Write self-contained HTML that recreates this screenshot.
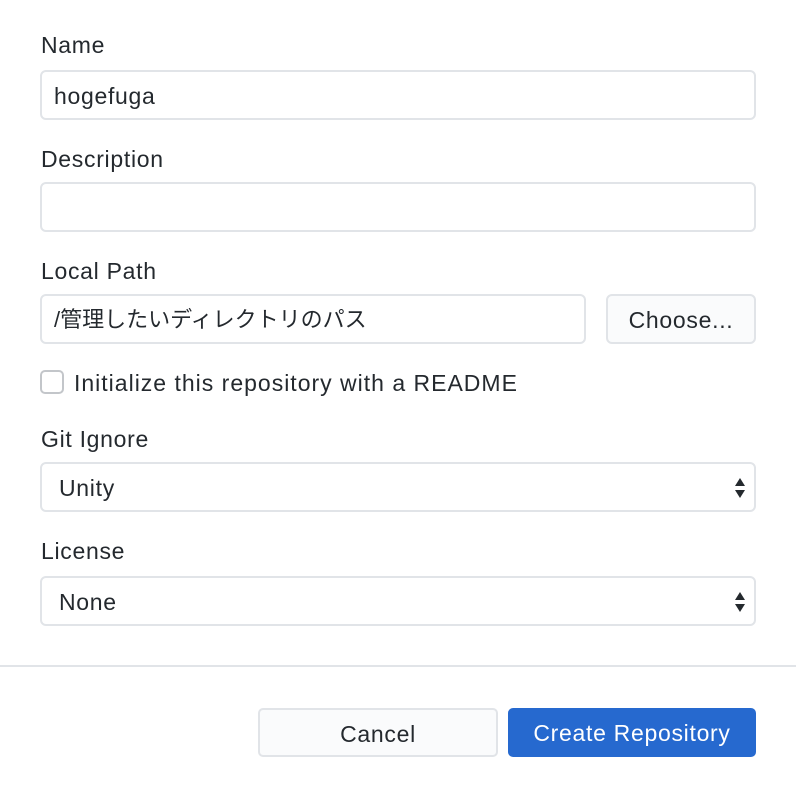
<!DOCTYPE html>
<html><head><meta charset="utf-8"><style>
body{margin:0;width:796px;height:794px;background:#fff;font-family:"Liberation Sans","Noto Sans CJK JP",sans-serif;color:#24292e;position:relative;overflow:hidden;font-size:23px;letter-spacing:0.7px}
.a{position:absolute}
.lbl{left:41px;line-height:26px}
.in{left:40px;width:712px;height:46px;border:2px solid #e1e4e8;border-radius:6px;line-height:48px}
.in span{position:absolute;left:12px;top:0}
.arr{position:absolute;right:8px;top:13px;width:12px}
</style></head><body>
<div class="a lbl" style="top:32px">Name</div>
<div class="a in" style="top:70px"><span>hogefuga</span></div>
<div class="a lbl" style="top:146px">Description</div>
<div class="a in" style="top:182px"></div>
<div class="a lbl" style="top:258px">Local Path</div>
<div class="a in" style="top:294px;width:542px"><span style="letter-spacing:0;font-size:22px">/管理したいディレクトリのパス</span></div>
<div class="a" style="left:606px;top:294px;width:146px;height:46px;border:2px solid #e1e4e8;border-radius:6px;background:#fafbfc;line-height:48px;text-align:center">Choose...</div>
<div class="a" style="left:40px;top:370px;width:20px;height:20px;border:2px solid #c3c6ca;border-radius:5px"></div>
<div class="a" style="left:74px;top:370px;line-height:26px;letter-spacing:1px">Initialize this repository with a README</div>
<div class="a lbl" style="top:426px">Git Ignore</div>
<div class="a in" style="top:462px"><span style="left:17px">Unity</span><svg class="arr" viewBox="0 0 12 22" height="22"><path d="M6 1L11 9H1Z M1 13H11L6 21Z" fill="#24292e"/></svg></div>
<div class="a lbl" style="top:538px">License</div>
<div class="a in" style="top:576px"><span style="left:17px">None</span><svg class="arr" viewBox="0 0 12 22" height="22"><path d="M6 1L11 9H1Z M1 13H11L6 21Z" fill="#24292e"/></svg></div>
<div class="a" style="left:0;top:665px;width:796px;height:2px;background:#e1e4e8"></div>
<div class="a" style="left:258px;top:708px;width:236px;height:45px;border:2px solid #e1e4e8;border-radius:5px;background:#fafbfc;line-height:49px;text-align:center">Cancel</div>
<div class="a" style="left:508px;top:708px;width:248px;height:49px;border-radius:5px;background:#2669cf;color:#fff;line-height:51px;text-align:center">Create Repository</div>
</body></html>
